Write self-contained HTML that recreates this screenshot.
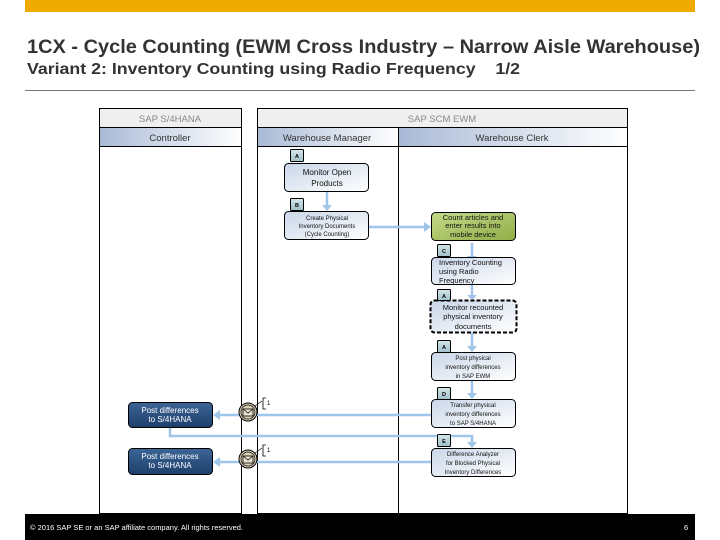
<!DOCTYPE html>
<html><head><meta charset="utf-8"><style>
html,body{margin:0;padding:0;background:#fff;}
svg{display:block;font-family:"Liberation Sans",sans-serif;}
</style></head><body>
<svg width="720" height="540" viewBox="0 0 720 540" xmlns="http://www.w3.org/2000/svg">
<defs>
<linearGradient id="hg" x1="0" x2="1" y1="0" y2="0"><stop offset="0" stop-color="#a9b9d6"/><stop offset="0.6" stop-color="#dde4ef"/><stop offset="1" stop-color="#ffffff"/></linearGradient>
<linearGradient id="bx" x1="0" x2="1" y1="0" y2="1"><stop offset="0" stop-color="#c9d6e8"/><stop offset="1" stop-color="#ffffff"/></linearGradient>
<linearGradient id="gr" x1="0" x2="1" y1="0" y2="1"><stop offset="0" stop-color="#c6d98a"/><stop offset="1" stop-color="#8fae46"/></linearGradient>
<linearGradient id="bl" x1="0" x2="0" y1="0" y2="1"><stop offset="0" stop-color="#3c6596"/><stop offset="1" stop-color="#1e3f6b"/></linearGradient>
<linearGradient id="bd" x1="0" x2="0" y1="0" y2="1"><stop offset="0" stop-color="#d6e6ea"/><stop offset="1" stop-color="#9fc0c8"/></linearGradient>
</defs>
<rect x="25" y="0" width="670" height="12" fill="#f0ab00"/>
<text x="27" y="53" font-size="19" font-weight="bold" fill="#333" textLength="673" lengthAdjust="spacingAndGlyphs">1CX - Cycle Counting (EWM Cross Industry – Narrow Aisle Warehouse)</text>
<text x="27" y="74" font-size="16" font-weight="bold" fill="#333" textLength="493" lengthAdjust="spacingAndGlyphs" xml:space="preserve">Variant 2: Inventory Counting using Radio Frequency    1/2</text>
<rect x="25" y="90" width="670" height="1" fill="#777"/>

<!-- left pool -->
<rect x="99.5" y="108.5" width="142" height="405" fill="#fff" stroke="#000"/>
<rect x="100" y="109" width="141" height="18" fill="#efefef"/>
<rect x="100" y="128" width="141" height="18" fill="url(#hg)"/>
<line x1="99.5" y1="127.5" x2="241.5" y2="127.5" stroke="#000"/>
<line x1="99.5" y1="146.5" x2="241.5" y2="146.5" stroke="#000"/>
<text x="170" y="122" font-size="9.5" fill="#888" text-anchor="middle">SAP S/4HANA</text>
<text x="170" y="141" font-size="9.5" fill="#333" text-anchor="middle">Controller</text>

<!-- right pool -->
<rect x="257.5" y="108.5" width="370" height="405" fill="#fff" stroke="#000"/>
<rect x="258" y="109" width="369" height="18" fill="#efefef"/>
<rect x="258" y="128" width="140" height="18" fill="url(#hg)"/>
<rect x="399" y="128" width="228" height="18" fill="url(#hg)"/>
<line x1="257.5" y1="127.5" x2="627.5" y2="127.5" stroke="#000"/>
<line x1="257.5" y1="146.5" x2="627.5" y2="146.5" stroke="#000"/>
<line x1="398.5" y1="127.5" x2="398.5" y2="513.5" stroke="#000"/>
<text x="442" y="122" font-size="9.5" fill="#888" text-anchor="middle">SAP SCM EWM</text>
<text x="327" y="141" font-size="9.5" fill="#333" text-anchor="middle">Warehouse Manager</text>
<text x="512" y="141" font-size="9.5" fill="#333" text-anchor="middle">Warehouse Clerk</text>

<!-- connectors -->
<g stroke="#9fc5ea" stroke-width="2.5" fill="none">
<line x1="327" y1="192" x2="327" y2="207"/>
<line x1="369" y1="227" x2="425" y2="227"/>
<line x1="472" y1="243" x2="472" y2="258"/>
<line x1="472" y1="284" x2="472" y2="297"/>
<line x1="472" y1="332" x2="472" y2="348"/>
<line x1="472" y1="380" x2="472" y2="395"/>
<line x1="431" y1="415" x2="218" y2="415"/>
<line x1="431" y1="462" x2="218" y2="462"/>
<polyline points="170,427 170,436 472,436 472,444"/>
</g>
<g fill="#9fc5ea">
<polygon points="322,205 332,205 327,211"/>
<polygon points="424,222 424,232 431,227"/>
<polygon points="467,256 477,256 472,262"/>
<polygon points="467,295 477,295 472,300"/>
<polygon points="467,346 477,346 472,352"/>
<polygon points="467,393 477,393 472,399"/>
<polygon points="467,442 477,442 472,448"/>
<polygon points="220,410 220,420 213,415"/>
<polygon points="220,457 220,467 213,462"/>
</g>

<!-- manager boxes -->
<rect x="284.5" y="163.5" width="84" height="28" rx="4" fill="url(#bx)" stroke="#000"/>
<text font-size="8" fill="#111" text-anchor="middle"><tspan x="327" y="175">Monitor Open</tspan><tspan x="327" y="186">Products</tspan></text>
<rect x="284.5" y="211.5" width="84" height="28" rx="4" fill="url(#bx)" stroke="#000"/>
<text font-size="6" fill="#111" text-anchor="middle"><tspan x="327" y="220">Create Physical</tspan><tspan x="327" y="228">Inventory Documents</tspan><tspan x="327" y="236">(Cycle Counting)</tspan></text>

<!-- clerk boxes -->
<rect x="431.5" y="212.5" width="84" height="28" rx="4" fill="url(#gr)" stroke="#000"/>
<text font-size="7.5" fill="#111" text-anchor="middle"><tspan x="473" y="220">Count articles and</tspan><tspan x="473" y="228">enter results into</tspan><tspan x="473" y="237">mobile device</tspan></text>
<rect x="431.5" y="257.5" width="84" height="27" rx="4" fill="url(#bx)" stroke="#000"/>
<text font-size="7.5" fill="#111"><tspan x="439" y="265">Inventory Counting</tspan><tspan x="439" y="274">using Radio</tspan><tspan x="439" y="283">Frequency</tspan></text>
<rect x="430.5" y="300.5" width="86" height="32" rx="4" fill="url(#bx)" stroke="#000" stroke-width="2" stroke-dasharray="4,2"/>
<text font-size="7.5" fill="#111" text-anchor="middle"><tspan x="473" y="310">Monitor recounted</tspan><tspan x="473" y="319">physical inventory</tspan><tspan x="473" y="329">documents</tspan></text>
<rect x="431.5" y="352.5" width="84" height="28" rx="4" fill="url(#bx)" stroke="#000"/>
<text font-size="6" fill="#111" text-anchor="middle"><tspan x="473" y="360">Post physical</tspan><tspan x="473" y="369">inventory differences</tspan><tspan x="473" y="378">in SAP EWM</tspan></text>
<rect x="431.5" y="399.5" width="84" height="28" rx="4" fill="url(#bx)" stroke="#000"/>
<text font-size="6" fill="#111" text-anchor="middle"><tspan x="473" y="407">Transfer physical</tspan><tspan x="473" y="416">inventory differences</tspan><tspan x="473" y="425">to SAP S/4HANA</tspan></text>
<rect x="431.5" y="448.5" width="84" height="28" rx="4" fill="url(#bx)" stroke="#000"/>
<text font-size="6" fill="#111" text-anchor="middle"><tspan x="473" y="456">Difference Analyzer</tspan><tspan x="473" y="465">for Blocked Physical</tspan><tspan x="473" y="474">Inventory Differences</tspan></text>

<!-- badges -->
<g stroke="#000" fill="url(#bd)">
<rect x="290.5" y="149.5" width="13" height="12" rx="1"/>
<rect x="290.5" y="198.5" width="13" height="12" rx="1"/>
<rect x="437.5" y="244.5" width="13" height="12" rx="1"/>
<rect x="437.5" y="289.5" width="13" height="11" rx="1"/>
<rect x="437.5" y="340.5" width="13" height="12" rx="1"/>
<rect x="437.5" y="387.5" width="13" height="12" rx="1"/>
<rect x="437.5" y="434.5" width="13" height="12" rx="1"/>
</g>
<g font-size="5.5" font-weight="bold" fill="#000" text-anchor="middle">
<text x="297" y="158">A</text><text x="297" y="207">B</text><text x="444" y="253">C</text>
<text x="444" y="298">A</text><text x="444" y="349">A</text><text x="444" y="396">D</text><text x="444" y="443">E</text>
</g>

<!-- blue boxes -->
<rect x="128.5" y="402.5" width="84" height="25" rx="4" fill="url(#bl)" stroke="#000"/>
<text font-size="8" fill="#fff" text-anchor="middle"><tspan x="170" y="413">Post differences</tspan><tspan x="170" y="422">to S/4HANA</tspan></text>
<rect x="128.5" y="448.5" width="84" height="26" rx="4" fill="url(#bl)" stroke="#000"/>
<text font-size="8" fill="#fff" text-anchor="middle"><tspan x="170" y="459">Post differences</tspan><tspan x="170" y="468">to S/4HANA</tspan></text>

<!-- message events -->
<g>
<circle cx="248" cy="412" r="9" fill="#d9d0b8" stroke="#000"/>
<circle cx="248" cy="412" r="7" fill="none" stroke="#000" stroke-width="0.7"/>
<rect x="243" y="409" width="10" height="7" fill="#e8e2d2" stroke="#000" stroke-width="0.8"/>
<polyline points="243,409 248,413 253,409" fill="none" stroke="#000" stroke-width="0.7"/>
<line x1="255" y1="406" x2="262" y2="401" stroke="#000" stroke-width="0.6"/>
<polyline points="266,398 263,398 263,409 266,409" fill="none" stroke="#000" stroke-width="0.8"/>
<text x="267" y="405" font-size="6">1</text>
<circle cx="248" cy="459" r="9" fill="#d9d0b8" stroke="#000"/>
<circle cx="248" cy="459" r="7" fill="none" stroke="#000" stroke-width="0.7"/>
<rect x="243" y="456" width="10" height="7" fill="#e8e2d2" stroke="#000" stroke-width="0.8"/>
<polyline points="243,456 248,460 253,456" fill="none" stroke="#000" stroke-width="0.7"/>
<line x1="255" y1="453" x2="262" y2="448" stroke="#000" stroke-width="0.6"/>
<polyline points="266,445 263,445 263,456 266,456" fill="none" stroke="#000" stroke-width="0.8"/>
<text x="267" y="452" font-size="6">1</text>
</g>

<!-- footer -->
<rect x="25" y="514" width="670" height="26" fill="#000"/>
<text x="30" y="530" font-size="7.5" fill="#fff">© 2016 SAP SE or an SAP affiliate company. All rights reserved.</text>
<text x="684" y="530" font-size="7.5" fill="#fff">6</text>
</svg>
</body></html>
